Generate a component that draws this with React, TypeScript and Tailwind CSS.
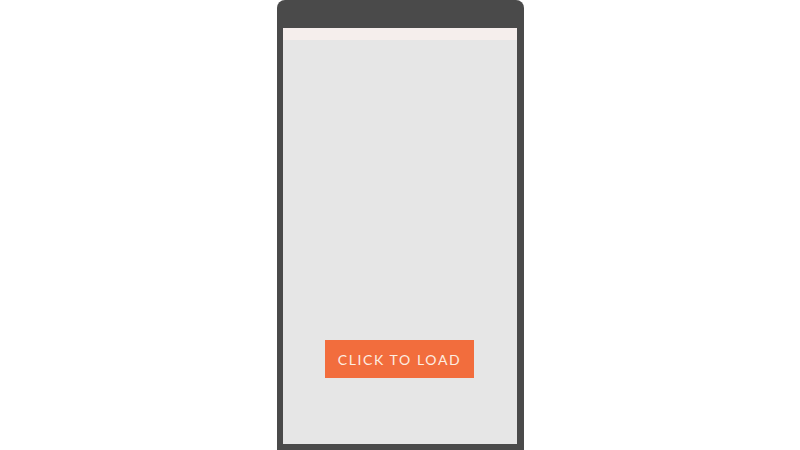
export default function App() {
  return (
    <div className="w-[800px] h-[450px] bg-white overflow-hidden flex justify-center">
      <div className="w-[247px] h-[450px] bg-[#4a4a4a] rounded-t-[8px] pt-[28px] pl-[6px] pr-[7px] pb-[6px] flex">
        <div className="flex-1 flex flex-col bg-[#e6e6e6]">
          <div className="h-[12px] bg-[#f5eeec]" />
          <div className="flex-1 flex flex-col items-center justify-end pb-[66px]">
            <button
              className="w-[149px] h-[38px] bg-[#f26d3d] text-[#fdeee2] text-[14px] tracking-[1.6px] flex items-center justify-center"
              style={{ fontFamily: "Lato, 'Liberation Sans', sans-serif" }}
            >
              CLICK TO LOAD
            </button>
          </div>
        </div>
      </div>
    </div>
  );
}
